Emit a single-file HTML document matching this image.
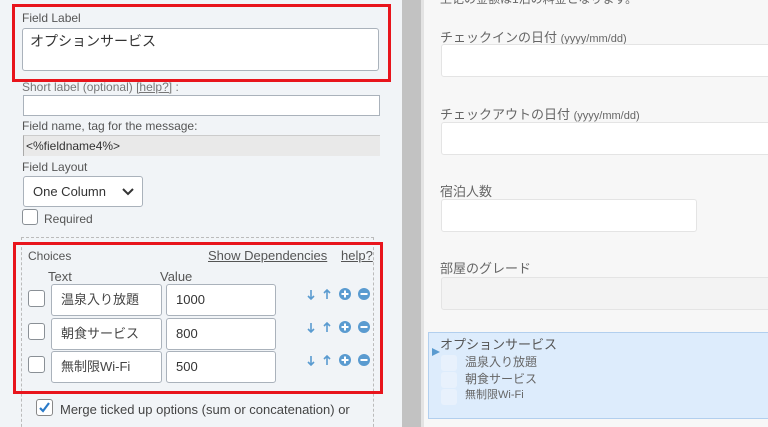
<!DOCTYPE html>
<html><head><meta charset="utf-8"><style>
*{box-sizing:border-box;margin:0;padding:0}
html,body{width:768px;height:427px;overflow:hidden}
body{position:relative;background:#f7f7f7;font-family:"Liberation Sans","Noto Sans CJK JP",sans-serif;color:#333;line-height:1.2}
.a{position:absolute}
.lp{left:0;top:0;width:402px;height:427px;background:#f1f4f7}
.t{font-size:12px;color:#555;white-space:nowrap}
.in{background:#fff;border:1px solid #aab2bb;border-radius:3px}
.red{border:3px solid #e8141c}
.cb{width:17px;height:17px;border:1px solid #8a9096;border-radius:3px;background:#fff}
.rl{font-size:12px;color:#666;white-space:nowrap}
.ri{background:#fff;border:1px solid #e4e4e4;border-radius:3px}
.ci{padding:7px 9px;font-size:13px;color:#444;line-height:16px;white-space:nowrap}
</style></head><body>
<div class="a lp"></div>
<div class="a t" style="left:22px;top:11px">Field Label</div>
<div class="a in" style="left:22px;top:28px;width:357px;height:43px;padding:4px 7px;font-size:14px;color:#333">オプションサービス</div>
<div class="a red" style="left:12px;top:4px;width:379px;height:78px"></div>
<div class="a t" style="left:22px;top:80px;color:#777">Short label (optional) <u>[help?]</u> :</div>
<div class="a in" style="left:23px;top:95px;width:357px;height:21px;border-radius:0"></div>
<div class="a t" style="left:22px;top:119px">Field name, tag for the message:</div>
<div class="a" style="left:23px;top:135px;width:357px;height:21px;background:#e9e9e9;border-left:1px solid #aaa;border-top:1px solid #ccc;font-size:12px;padding:3px 2px">&lt;%fieldname4%&gt;</div>
<div class="a t" style="left:22px;top:160px">Field Layout</div>
<div class="a in" style="left:23px;top:176px;width:120px;height:31px;padding:7px 9px;font-size:13px;color:#333">One Column
<svg style="position:absolute;right:8px;top:10px" width="12" height="10"><path d="M1 2l5 5 5-5" stroke="#333" stroke-width="2" fill="none"/></svg></div>
<div class="a cb" style="left:22px;top:209px;width:16px;height:16px"></div>
<div class="a t" style="left:44px;top:212px">Required</div>
<div class="a" style="left:21px;top:237px;width:353px;height:200px;border:1px dashed #bbb"></div>
<div class="a red" style="left:13px;top:242px;width:370px;height:152px"></div>
<div class="a t" style="left:28px;top:249px">Choices</div>
<div class="a t" style="left:208px;top:248px;font-size:13px;text-decoration:underline">Show Dependencies</div>
<div class="a t" style="left:341px;top:248px;font-size:13px;text-decoration:underline">help?</div>
<div class="a t" style="left:48px;top:269px;font-size:13px">Text</div>
<div class="a t" style="left:160px;top:269px;font-size:13px">Value</div>
<div class="a cb" style="left:28px;top:290px"></div>
<div class="a in ci" style="left:51px;top:284px;width:111px;height:32px">温泉入り放題</div>
<div class="a in ci" style="left:166px;top:284px;width:110px;height:32px;color:#333">1000</div>
<div class="a cb" style="left:28px;top:323px"></div>
<div class="a in ci" style="left:51px;top:318px;width:111px;height:32px">朝食サービス</div>
<div class="a in ci" style="left:166px;top:318px;width:110px;height:32px;color:#333">800</div>
<div class="a cb" style="left:28px;top:356px"></div>
<div class="a in ci" style="left:51px;top:351px;width:111px;height:32px">無制限Wi-Fi</div>
<div class="a in ci" style="left:166px;top:351px;width:110px;height:32px;color:#333">500</div>
<svg class="a" style="left:300px;top:286px" width="75" height="80">
<g fill="#5a9bd0" stroke="#5a9bd0">
<g id="r"><path d="M11 4v9M8 10l3 3 3-3" fill="none" stroke-width="1.6"/><path d="M27 13V4M24 7l3-3 3 3" fill="none" stroke-width="1.6"/>
<circle cx="45" cy="8" r="6" stroke="none"/><circle cx="64" cy="8" r="6" stroke="none"/>
<path d="M41.5 8h7M45 4.5v7M60.5 8h7" stroke="#fff" stroke-width="2"/></g>
<use href="#r" y="33"/><use href="#r" y="66"/></g></svg>
<div class="a cb" style="left:36px;top:399px;border-color:#888"><svg width="15" height="15"><path d="M3 8l3 3 6-8" stroke="#2a7ac8" stroke-width="2.2" fill="none"/></svg></div>
<div class="a" style="left:60px;top:402px;font-size:13px;color:#444;white-space:nowrap">Merge ticked up options (sum or concatenation) or</div>
<div class="a" style="left:402px;top:0;width:19px;height:427px;background:#c2c2c2"></div>
<div class="a" style="left:421px;top:0;width:3px;height:427px;background:#e3e3e3"></div>
<div class="a rl" style="left:440px;top:-8px">上记の金额は1泊の料金となります。</div>
<div class="a rl" style="left:440px;top:30px;font-size:13px">チェックインの日付 <span style="font-size:11px">(yyyy/mm/dd)</span></div>
<div class="a ri" style="left:441px;top:44px;width:340px;height:33px"></div>
<div class="a rl" style="left:440px;top:107px;font-size:13px">チェックアウトの日付 <span style="font-size:11px">(yyyy/mm/dd)</span></div>
<div class="a ri" style="left:441px;top:122px;width:340px;height:33px"></div>
<div class="a rl" style="left:440px;top:184px;font-size:13px">宿泊人数</div>
<div class="a ri" style="left:441px;top:199px;width:256px;height:33px"></div>
<div class="a rl" style="left:440px;top:261px;font-size:13px">部屋のグレード</div>
<div class="a ri" style="left:441px;top:277px;width:340px;height:33px;background:#f3f3f3"></div>
<div class="a" style="left:428px;top:332px;width:350px;height:87px;background:#ddecfc;border:1px solid #b2cfee"></div>
<div class="a" style="left:432px;top:348px;width:0;height:0;border-left:8px solid #5a9bd0;border-top:4px solid transparent;border-bottom:4px solid transparent"></div>
<div class="a" style="left:440px;top:337px;font-size:13px;color:#555">オプションサービス</div>
<div class="a" style="left:441px;top:355px;width:16px;height:16px;background:#e8f1fc;border-radius:3px"></div>
<div class="a" style="left:441px;top:372px;width:16px;height:16px;background:#e8f1fc;border-radius:3px"></div>
<div class="a" style="left:441px;top:389px;width:16px;height:16px;background:#e8f1fc;border-radius:3px"></div>
<div class="a rl" style="left:465px;top:355px">温泉入り放題</div>
<div class="a rl" style="left:465px;top:372px">朝食サービス</div>
<div class="a rl" style="left:465px;top:389px;font-size:11px">無制限Wi-Fi</div>
</body></html>
